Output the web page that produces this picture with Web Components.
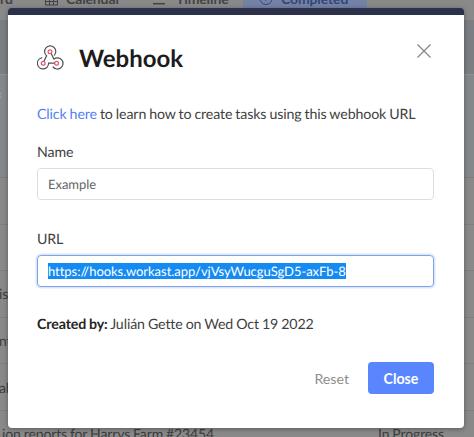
<!DOCTYPE html>
<html lang="en">
<head>
<meta charset="utf-8">
<title>Webhook</title>
<style>
    body {
        margin: 0;
        height: 437px;
        overflow: hidden;
        position: relative;
        font-family: Lato, "Liberation Sans", sans-serif;
        font-size: 14.200px;
        letter-spacing: -0.12px;
        word-spacing: -0.500px;
        text-rendering: geometricPrecision;
        color: #3f3f3f;
        background: #898989;
    }
</style>
</head>
<body>
<task-board></task-board>
<webhook-modal heading="Webhook">
    <modal-field label="Name">Example</modal-field>
    <modal-field label="URL" selected>https://hooks.workast.app/vjVsyWucguSgD5-axFb-8</modal-field>
</webhook-modal>

<script>
class TaskRow extends HTMLElement {

    constructor() {
        super();
        this.shadowDOM = this.attachShadow({mode: "open"});
    }

    connectedCallback() {
        this.shadowDOM.innerHTML = `
            <style>
                :host {
                    display: flex;
                    align-items: center;
                    justify-content: space-between;
                    box-sizing: border-box;
                    flex: 0 0 46.6px;
                    border-bottom: 1px solid #7f7f7f;
                    padding: 0 30px 0 2px;
                    white-space: nowrap;
                    color: #3c3c3c;
                }
                :host([clipped]) {
                    padding-left: 0;
                    text-indent: -1px;
                }
            </style>
            <slot></slot>
            <slot name="status"></slot>`;
    }
}

class TaskBoard extends HTMLElement {

    constructor() {
        super();
        this.shadowDOM = this.attachShadow({mode: "open"});
    }

    connectedCallback() {
        this.shadowDOM.innerHTML = `
            <style>
                :host {
                    display: flex;
                    flex-direction: column;
                    height: 457px;
                    font-size: 14px;
                }
                nav {
                    display: flex;
                    flex: 0 0 20px;
                    color: #424344;
                    font-size: 14px;
                    font-weight: bold;
                    line-height: 18px;
                }
                nav span {
                    display: flex;
                    gap: 8px;
                    height: 18px;
                    margin-top: -10px;
                }
                .board { width: 45px; }
                .calendar { width: 108px; }
                .timeline { width: 90px; }
                nav .active {
                    width: 124px;
                    padding: 0 0 0 16px;
                    height: 28px;
                    border-radius: 0 0 4px 4px;
                    background: #7482a5;
                    color: #344579;
                    box-sizing: border-box;
                }
                svg {
                    flex: none;
                    fill: none;
                    stroke: currentColor;
                }
                .head {
                    flex: 0 0 54px;
                    background: #7b7e82;
                    border-bottom: 1px solid #919191;
                }
                .group {
                    flex: 0 0 102px;
                    background: #84888b;
                    border-bottom: 1px solid #7b7b7b;
                }
                .group-row {
                    height: 48px;
                    padding-top: 10px;
                    text-indent: -2px;
                    color: #a8a8a8;
                    box-sizing: border-box;
                }
            </style>
            <nav>
                <span class="board">rd</span>
                <span class="calendar"><svg width="13" height="18" viewBox="0 0 13 18"><path d="M.5 4.500h12v10.500H.5zM.5 8h12M.5 11.500h12M4.500 4.500v10.500M8.500 4.500v10.500"/></svg>Calendar</span>
                <span class="timeline"><svg width="15" height="18" viewBox="0 0 15 18"><path stroke-width="1.500" d="M0 13.700h12"/></svg>Timeline</span>
                <span class="active"><svg width="14" height="18" viewBox="0 0 14 18"><circle cx="7" cy="8.500" r="6"/><path d="M4.500 8.500l2 2 3-4"/></svg>Completed</span>
            </nav>
            <div class="head"></div>
            <div class="group"><div class="group-row">‹</div></div>
            <task-row></task-row>
            <task-row></task-row>
            <task-row clipped>is</task-row>
            <task-row clipped>nt</task-row>
            <task-row clipped>al</task-row>
            <task-row>ion reports for Harrys Farm #23454<span slot="status">In Progress</span></task-row>`;
    }
}

class ModalField extends HTMLElement {

    constructor() {
        super();
        this.shadowDOM = this.attachShadow({mode: "open"});
    }

    connectedCallback() {
        this.shadowDOM.innerHTML = `
            <style>
                :host {
                    display: block;
                    height: 87px;
                }
                label {
                    display: block;
                    height: 24px;
                    line-height: 18px;
                }
                .input {
                    display: flex;
                    align-items: center;
                    box-sizing: border-box;
                    height: 32px;
                    padding: 0 10px;
                    border: 1px solid #dedede;
                    border-radius: 4px;
                    font-size: 13px;
                    letter-spacing: -0.04px;
                    line-height: 16px;
                    color: #666;
                }
                :host([selected]) .input {
                    border-color: #80a2ea;
                    box-shadow: 0 0 0 1.500px #dbe6fb;
                }
                :host([selected]) .value {
                    background: #148bf3;
                    color: #fff;
                }
            </style>
            <label>${this.getAttribute("label")}</label>
            <div class="input"><span class="value"><slot></slot></span></div>`;
    }
}

class WebhookModal extends HTMLElement {

    constructor() {
        super();
        this.shadowDOM = this.attachShadow({mode: "open"});
    }

    connectedCallback() {
        this.shadowDOM.innerHTML = `
            <style>
                :host {
                    position: absolute;
                    top: 8px;
                    left: 8px;
                    display: flex;
                    flex-direction: column;
                    box-sizing: border-box;
                    width: 456px;
                    height: 420px;
                    padding: 29px 30px 0 29px;
                    border-top: 7px solid #2b304b;
                    border-radius: 4px;
                    background: #fff;
                    box-shadow: 0 1px 5px rgba(0, 0, 0, 0.35);
                }
                header {
                    display: flex;
                    height: 62px;
                }
                h2 {
                    flex: 1;
                    margin: 0 0 0 15px;
                    font-size: 24px;
                    letter-spacing: 0;
                    line-height: 30px;
                    color: #1c1c1c;
                }
                svg {
                    flex: none;
                    fill: none;
                }
                .hook { margin-top: 1px; }
                .close { margin-right: 3px; }
                p {
                    margin: 0;
                    height: 38px;
                    line-height: 18px;
                    white-space: nowrap;
                }
                a { color: #5580f6; }
                p.created {
                    height: 46px;
                    margin-top: -2px;
                }
                b { color: #242424; }
                footer {
                    display: flex;
                    justify-content: flex-end;
                    align-items: center;
                    gap: 19px;
                }
                button {
                    border: 0;
                    padding: 0;
                    background: none;
                    font: inherit;
                    color: #8d8d8d;
                }
                button.primary {
                    width: 66px;
                    height: 32px;
                    border-radius: 4px;
                    background: #5985ff;
                    font-weight: bold;
                    color: #fff;
                }
            </style>
            <header>
                <svg class="hook" width="27" height="27" viewBox="0 0 27 27" stroke-linecap="round">
                    <g stroke="#4b5157" stroke-width="1.200">
                        <path d="M17.400 10.200A5.600 5.600 0 1 0 9.600 10.800L7.100 16"/>
                        <path d="M4.800 12.800A5.600 5.600 0 1 0 11.600 18.200H17.500"/>
                        <path d="M14.400 9L16.900 14.100A5.600 5.600 0 1 1 16.100 22"/>
                    </g>
                    <g stroke="#e0566b" stroke-width="1.200">
                        <circle cx="13" cy="6.800" r="1.900"/>
                        <circle cx="6.200" cy="18.200" r="1.900"/>
                        <circle cx="19.600" cy="18.200" r="1.900"/>
                    </g>
                </svg>
                <h2>${this.getAttribute("heading")}</h2>
                <svg class="close" width="14" height="14" viewBox="0 0 14 14" stroke="#858585" stroke-width="1.200"><path d="M.5.5l13 13M13.500.5l-13 13"/></svg>
            </header>
            <p><a>Click here</a> to learn how to create tasks using this webhook URL</p>
            <slot></slot>
            <p class="created"><b>Created by:</b> Julián Gette on Wed Oct 19 2022</p>
            <footer>
                <button>Reset</button>
                <button class="primary">Close</button>
            </footer>`;
    }
}

customElements.define("task-row", TaskRow);
customElements.define("task-board", TaskBoard);
customElements.define("modal-field", ModalField);
customElements.define("webhook-modal", WebhookModal);
</script>
</body>
</html>
